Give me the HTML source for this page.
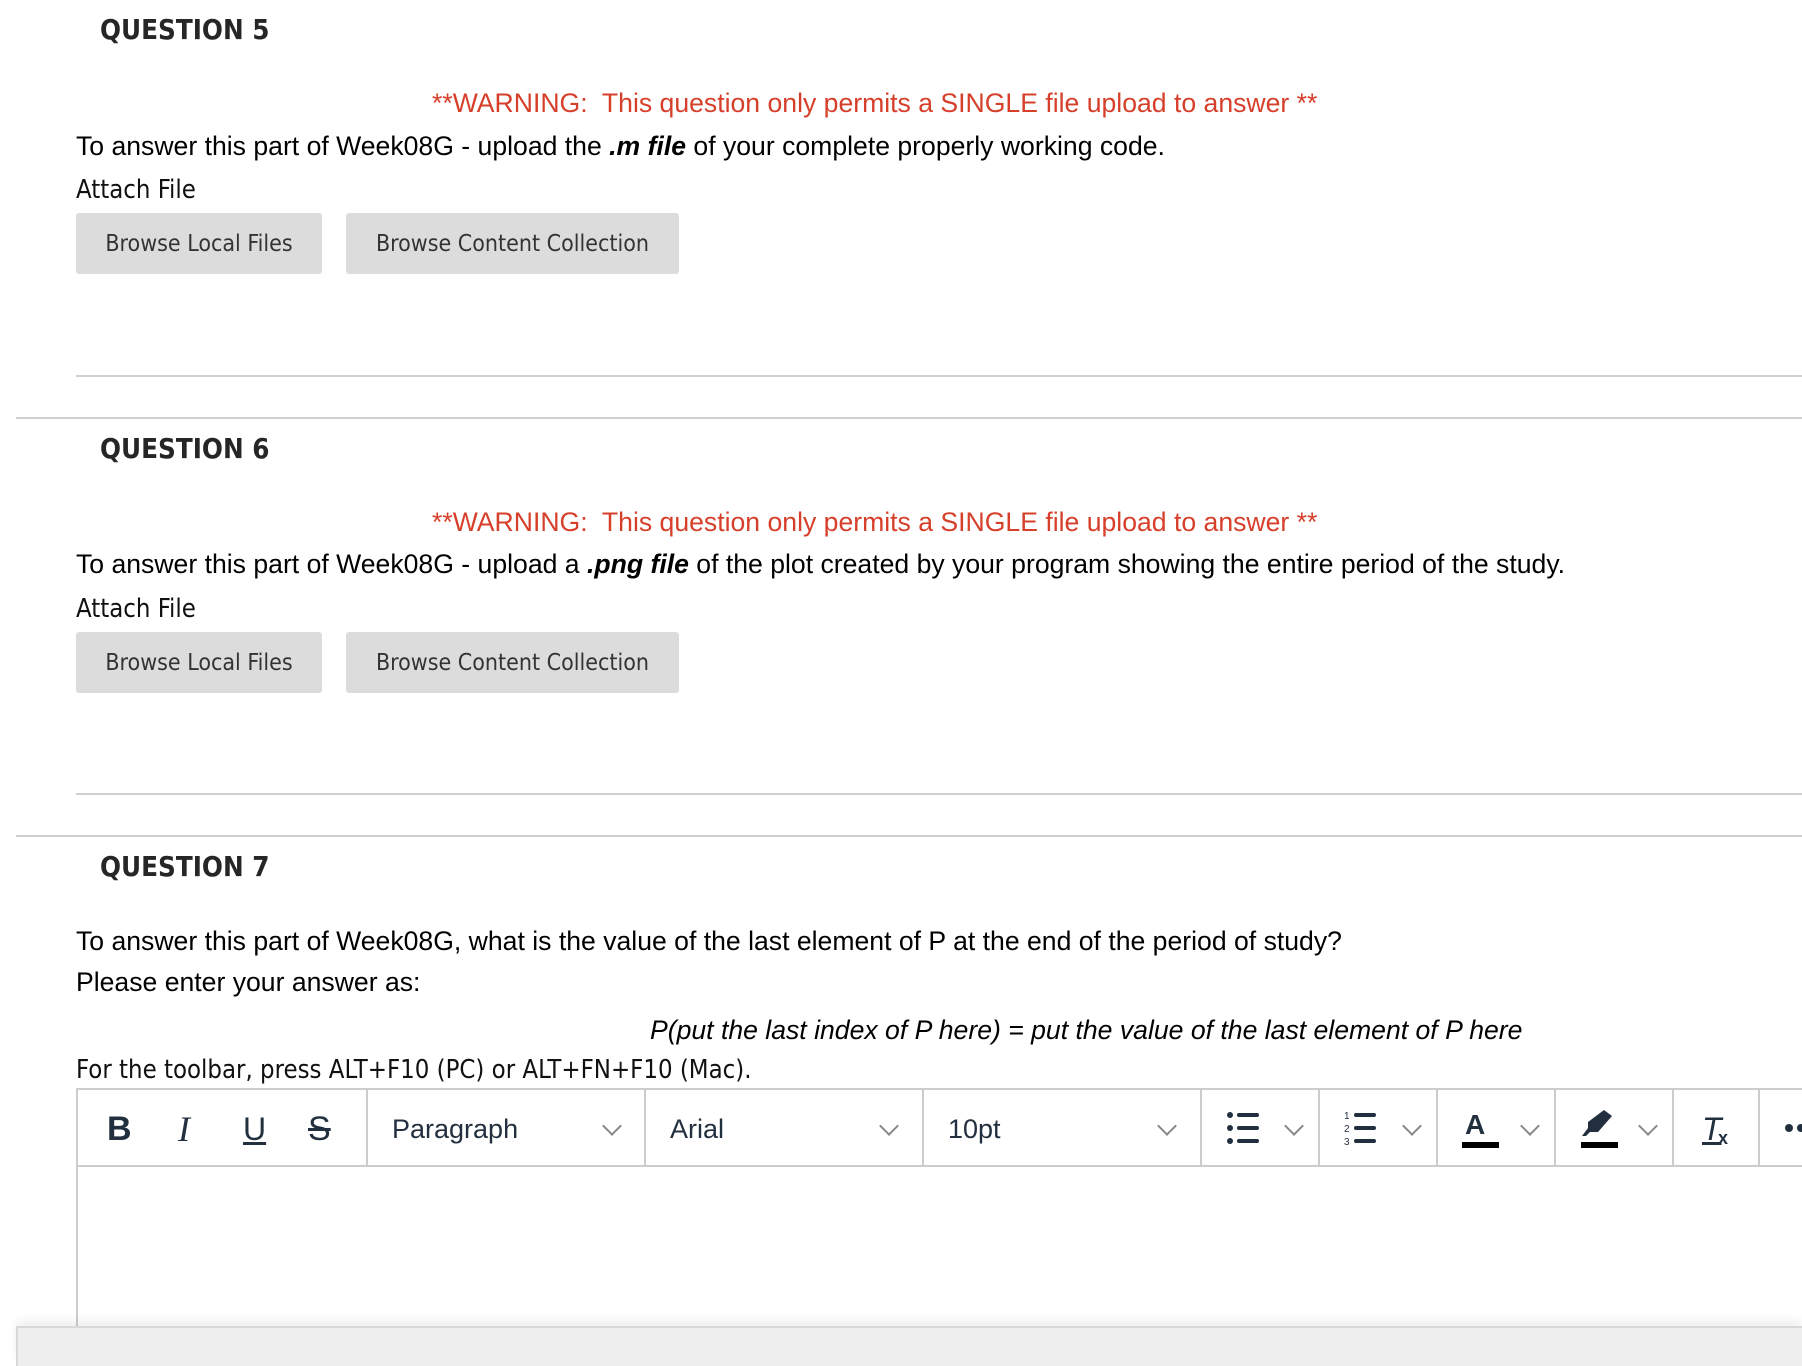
<!DOCTYPE html>
<html><head><meta charset="utf-8"><style>
*{margin:0;padding:0;box-sizing:border-box}
body{width:1802px;height:1354px;background:#fff;position:relative;overflow:hidden;font-family:"Liberation Sans",Arial,sans-serif;color:#000}
.a{position:absolute;white-space:nowrap}
.h{font-family:"DejaVu Sans Condensed","Liberation Sans",sans-serif;font-weight:bold;font-size:27.5px;color:#262626;left:100px;line-height:34px}
.w{color:#d6402b;font-size:26.6px;left:432px;line-height:30px}
.t{font-size:26.6px;left:76px;line-height:30px}
.s{font-family:"DejaVu Sans Condensed","Liberation Sans",sans-serif;font-size:25.5px;left:76px;line-height:30px;color:#111}
.btn{position:absolute;background:#dcdcdc;border-radius:3px;height:61px;font-family:"DejaVu Sans Condensed","Liberation Sans",sans-serif;font-size:23px;color:#333;display:flex;align-items:center;justify-content:center}
.hr{position:absolute;height:2px;background:#cfcfcf;right:0}
.dv{position:absolute;top:1090px;height:77px;width:2px;background:#ccc}
.dd{position:absolute;top:1110px;font-size:27px;color:#222f3e;line-height:38px;font-family:"Liberation Sans",sans-serif}
.ch{position:absolute;top:1119px;width:14px;height:14px;border-right:2px solid #888;border-bottom:2px solid #888;transform:rotate(45deg)}
</style></head><body>
<div class="a h" style="top:13px">QUESTION 5</div>
<div class="a w" style="top:88px">**WARNING:&nbsp; This question only permits a SINGLE file upload to answer **</div>
<div class="a t" style="top:131px">To answer this part of Week08G - upload the <b><i>.m file</i></b> of your complete properly working code.</div>
<div class="a s" style="top:175px">Attach File</div>
<div class="btn" style="left:76px;top:213px;width:246px">Browse Local Files</div>
<div class="btn" style="left:346px;top:213px;width:333px">Browse Content Collection</div>
<div class="hr" style="left:76px;top:375px"></div>
<div class="hr" style="left:16px;top:417px"></div>

<div class="a h" style="top:432px">QUESTION 6</div>
<div class="a w" style="top:507px">**WARNING:&nbsp; This question only permits a SINGLE file upload to answer **</div>
<div class="a t" style="top:549px">To answer this part of Week08G - upload a <b><i>.png file</i></b> of the plot created by your program showing the entire period of the study.</div>
<div class="a s" style="top:594px">Attach File</div>
<div class="btn" style="left:76px;top:632px;width:246px">Browse Local Files</div>
<div class="btn" style="left:346px;top:632px;width:333px">Browse Content Collection</div>
<div class="hr" style="left:76px;top:793px"></div>
<div class="hr" style="left:16px;top:835px"></div>

<div class="a h" style="top:850px">QUESTION 7</div>
<div class="a t" style="top:926px">To answer this part of Week08G, what is the value of the last element of P at the end of the period of study?</div>
<div class="a t" style="top:967px">Please enter your answer as:</div>
<div class="a t" style="top:1015px;left:650px;font-style:italic">P(put the last index of P here) = put the value of the last element of P here</div>
<div class="a s" style="top:1055px">For the toolbar, press ALT+F10 (PC) or ALT+FN+F10 (Mac).</div>

<div style="position:absolute;left:76px;top:1088px;width:1740px;height:270px;border:2px solid #ccc"></div>
<div style="position:absolute;left:76px;top:1165px;width:1740px;height:2px;background:#ccc"></div>
<div class="dv" style="left:366px"></div><div class="dv" style="left:644px"></div><div class="dv" style="left:922px"></div><div class="dv" style="left:1200px"></div><div class="dv" style="left:1318px"></div><div class="dv" style="left:1436px"></div><div class="dv" style="left:1554px"></div><div class="dv" style="left:1672px"></div><div class="dv" style="left:1758px"></div>
<div class="dd" style="left:107px;font-weight:bold;font-size:34px">B</div>
<div class="dd" style="left:178px;font-family:'Liberation Serif',serif;font-style:italic;font-size:36px">I</div>
<div class="dd" style="left:243px;font-size:32px;text-decoration:underline">U</div>
<div class="dd" style="left:308px;font-size:34px;text-decoration:line-through">S</div>
<div class="dd" style="left:392px">Paragraph</div><div class="ch" style="left:605px"></div>
<div class="dd" style="left:670px">Arial</div><div class="ch" style="left:882px"></div>
<div class="dd" style="left:948px">10pt</div><div class="ch" style="left:1160px"></div>
<svg class="a" style="left:1226px;top:1110px" width="40" height="36" viewBox="0 0 40 36" fill="#222f3e"><circle cx="4" cy="5" r="3"/><circle cx="4" cy="18" r="3"/><circle cx="4" cy="31" r="3"/><rect x="11" y="3" width="22" height="4" rx="2"/><rect x="11" y="16" width="22" height="4" rx="2"/><rect x="11" y="29" width="22" height="4" rx="2"/></svg>
<div class="ch" style="left:1287px"></div>
<svg class="a" style="left:1344px;top:1110px" width="40" height="36" viewBox="0 0 40 36" fill="#222f3e"><text x="0" y="9" font-size="10" font-family="Liberation Sans">1</text><text x="0" y="22" font-size="10" font-family="Liberation Sans">2</text><text x="0" y="35" font-size="10" font-family="Liberation Sans">3</text><rect x="10" y="3" width="22" height="4" rx="2"/><rect x="10" y="16" width="22" height="4" rx="2"/><rect x="10" y="29" width="22" height="4" rx="2"/></svg>
<div class="ch" style="left:1405px"></div>
<div class="dd" style="left:1465px;font-weight:bold;font-size:28px;top:1106px">A</div>
<div class="a" style="left:1462px;top:1142px;width:37px;height:6px;background:#000"></div>
<div class="ch" style="left:1523px"></div>
<svg class="a" style="left:1580px;top:1108px" width="38" height="32" viewBox="0 0 38 32" fill="#222f3e"><path d="M24 2 L32 8 L18 24 L10 24 L6 28 L2 28 L8 20 L8 14 Z"/></svg>
<div class="a" style="left:1581px;top:1142px;width:37px;height:6px;background:#000"></div>
<div class="ch" style="left:1641px"></div>
<div class="dd" style="left:1702px;font-style:italic;font-size:32px;text-decoration:underline">T</div>
<div class="a" style="left:1718px;top:1128px;font-size:18px;font-weight:bold;color:#222f3e">x</div>
<div class="a" style="left:1785px;top:1124px;width:8px;height:8px;border-radius:50%;background:#222f3e"></div>
<div class="a" style="left:1797px;top:1124px;width:8px;height:8px;border-radius:50%;background:#222f3e"></div>

<div style="position:absolute;left:16px;top:1326px;right:0;height:40px;background:#eee;border-top:2px solid #d8d8d8;border-left:2px solid #d8d8d8;box-shadow:0 -6px 8px rgba(0,0,0,0.06)"></div>
</body></html>
